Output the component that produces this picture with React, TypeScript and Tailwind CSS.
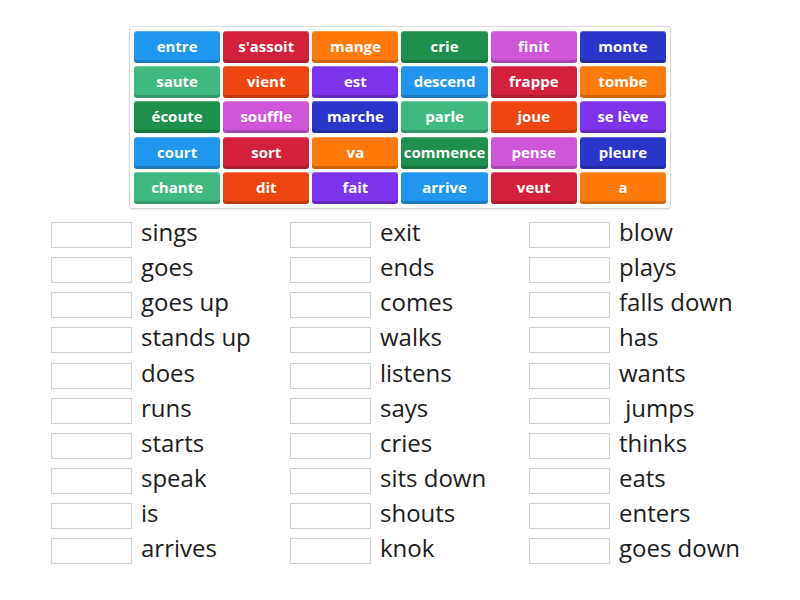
const TILE_COLORS = [
  "bg-[#2196ee]",
  "bg-[#d3213c]",
  "bg-[#ff7a0a]",
  "bg-[#1f8f4c]",
  "bg-[#cf55d9]",
  "bg-[#2a35c9]",
  "bg-[#3fb980]",
  "bg-[#ef4510]",
  "bg-[#7c33ea]",
];

const TILES = [
  "entre", "s'assoit", "mange", "crie", "finit", "monte",
  "saute", "vient", "est", "descend", "frappe", "tombe",
  "écoute", "souffle", "marche", "parle", "joue", "se lève",
  "court", "sort", "va", "commence", "pense", "pleure",
  "chante", "dit", "fait", "arrive", "veut", "a",
];

const COLUMNS = [
  ["sings", "goes", "goes up", "stands up", "does", "runs", "starts", "speak", "is", "arrives"],
  ["exit", "ends", "comes", "walks", "listens", "says", "cries", "sits down", "shouts", "knok"],
  ["blow", "plays", "falls down", "has", "wants", " jumps", "thinks", "eats", "enters", "goes down"],
];

export default function App() {
  return (
    <div className="min-h-[600px] w-[800px] bg-white pt-[26px] font-['Open_Sans',sans-serif]">
      <div className="mx-auto w-[542px] rounded-[3px] border border-[#d6d6d6] bg-white px-[4px] pt-[4px] pb-[4px] shadow-[0_1px_2px_rgba(0,0,0,0.08)]">
        <div className="grid grid-cols-6 gap-x-[3px] gap-y-[3.2px]">
          {TILES.map((word, i) => (
            <div
              key={word}
              className={`flex h-[32px] items-center justify-center overflow-hidden rounded-[3px] ${TILE_COLORS[i % 9]} shadow-[inset_0_-3px_0_rgba(0,0,0,0.18),inset_0_1px_0_rgba(255,255,255,0.25)]`}
            >
              <span className="whitespace-nowrap pb-[2px] text-[15px] leading-5 font-bold text-white">
                {word}
              </span>
            </div>
          ))}
        </div>
      </div>

      <div className="mt-[13px] flex pl-[51px]">
        {COLUMNS.map((col, c) => (
          <div key={c} className="flex w-[239px] flex-col gap-[9.2px]">
            {col.map((label) => (
              <div key={label} className="flex h-[26px] items-center gap-[9px]">
                <div className="h-[26px] w-[81px] shrink-0 border border-[#d0d0d0] bg-white" />
                <span className="whitespace-pre pb-[6px] text-[24px] leading-[26px] text-[#1c1c1c]">
                  {label}
                </span>
              </div>
            ))}
          </div>
        ))}
      </div>
    </div>
  );
}
